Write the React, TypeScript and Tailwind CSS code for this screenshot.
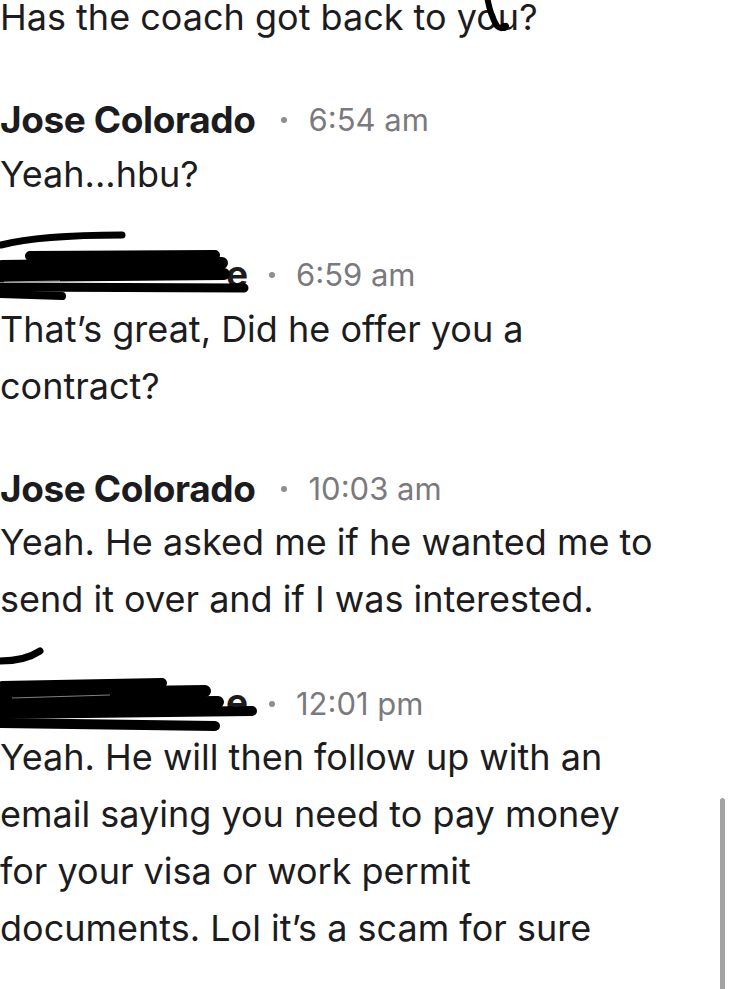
import React from "react";

const font = { fontFamily: '"Inter", "Liberation Sans", sans-serif' };

function Lines({ lines }: { lines: string[] }) {
  return (
    <div>
      {lines.map((l, i) => (
        <div key={i} className="whitespace-nowrap text-[36px] leading-[57px] text-[#1c1c1e]">
          {l}
        </div>
      ))}
    </div>
  );
}

function Dot() {
  return <span className="inline-block h-[6px] w-[6px] shrink-0 rounded-full bg-[#8e8e93]" />;
}

function Header({ name, time, lh }: { name: string; time: string; lh: string }) {
  return (
    <div className={`flex items-center whitespace-nowrap ${lh}`}>
      <span className="text-[37px] font-bold text-[#1c1c1e] tracking-[-0.4px]">{name}</span>
      <span className="ml-[26px] flex items-center">
        <Dot />
      </span>
      <span className="ml-[21px] text-[31px] text-[#7a7a7e]">{time}</span>
    </div>
  );
}

function RedactedHeader({ time, variant, lh }: { time: string; variant: 1 | 2; lh: string }) {
  return (
    <div className={`relative flex items-center whitespace-nowrap ${lh}`}>
      <span className="relative inline-block h-[50px] w-[250px] shrink-0 text-[37px] font-bold text-[#1c1c1e]">
        <span className="absolute left-[226px] top-[-2px]">e</span>
        {variant === 1 ? (
          <svg className="absolute left-0 top-[-24px]" width="260" height="90" viewBox="0 0 260 90">
            <path d="M1 19 Q40 9 122 9" stroke="#000" strokeWidth="7" fill="none" strokeLinecap="round" />
            <path d="M30 30 L215 29" stroke="#000" strokeWidth="10" strokeLinecap="round" />
            <path d="M2 40 L222 37" stroke="#000" strokeWidth="12" strokeLinecap="round" />
            <path d="M0 50 L224 48" stroke="#000" strokeWidth="12" strokeLinecap="round" />
            <path d="M0 61 L244 62" stroke="#000" strokeWidth="9" strokeLinecap="round" />
            <path d="M0 68 L62 70" stroke="#000" strokeWidth="8" strokeLinecap="round" />
            <path d="M4 56 L60 55" stroke="#fff" strokeWidth="1.2" opacity="0.5" />
          </svg>
        ) : (
          <svg className="absolute left-0 top-[-39px]" width="262" height="100" viewBox="0 0 262 100">
            <path d="M0 21 Q25 21 40 11" stroke="#000" strokeWidth="7" fill="none" strokeLinecap="round" />
            <path d="M2 46 L162 43" stroke="#000" strokeWidth="10" strokeLinecap="round" />
            <path d="M0 54 L205 51" stroke="#000" strokeWidth="12" strokeLinecap="round" />
            <path d="M0 64 L218 62" stroke="#000" strokeWidth="12" strokeLinecap="round" />
            <path d="M0 74 L252 71" stroke="#000" strokeWidth="10" strokeLinecap="round" />
            <path d="M0 83 L215 86" stroke="#000" strokeWidth="10" strokeLinecap="round" />
            <path d="M12 58 L110 55" stroke="#fff" strokeWidth="1.2" opacity="0.5" />
            <path d="M150 79 L210 79" stroke="#fff" strokeWidth="1.2" strokeDasharray="8 5" opacity="0.6" />
          </svg>
        )}
      </span>
      <span className="ml-[19px] flex items-center">
        <Dot />
      </span>
      <span className="ml-[21px] text-[31px] text-[#7a7a7e]">{time}</span>
    </div>
  );
}

export default function App() {
  return (
    <div className="relative h-[989px] w-[732px] overflow-hidden bg-white" style={font}>
      <div className="mt-[-11px] flex flex-col">
        <div className="relative">
          <Lines lines={["Has the coach got back to you?"]} />
          <svg className="absolute left-[480px] top-[9px]" width="36" height="40" viewBox="480 -2 36 40">
            <path d="M487 -4 Q490 15 497 26 Q501 30 506 26" stroke="#000" strokeWidth="6" fill="none" strokeLinecap="round" />
            <circle cx="504" cy="27" r="4" fill="#000" />
          </svg>
        </div>
        <div className="mt-[47px]">
          <Header name="Jose Colorado" time="6:54 am" lh="leading-[53px]" />
          <Lines lines={["Yeah...hbu?"]} />
        </div>
        <div className="mt-[46px]">
          <RedactedHeader time="6:59 am" variant={1} lh="leading-[52px]" />
          <Lines lines={["That’s great, Did he offer you a", "contract?"]} />
        </div>
        <div className="mt-[48px]">
          <Header name="Jose Colorado" time="10:03 am" lh="leading-[51px]" />
          <Lines lines={["Yeah. He asked me if he wanted me to", "send it over and if I was interested."]} />
        </div>
        <div className="mt-[51px]">
          <RedactedHeader time="12:01 pm" variant={2} lh="leading-[50px]" />
          <Lines
            lines={[
              "Yeah. He will then follow up with an",
              "email saying you need to pay money",
              "for your visa or work permit",
              "documents. Lol it’s a scam for sure",
            ]}
          />
        </div>
      </div>
      <div className="absolute right-[7px] top-[798px] h-[200px] w-[5px] rounded-t-full bg-[#a3a3a3]" />
    </div>
  );
}
